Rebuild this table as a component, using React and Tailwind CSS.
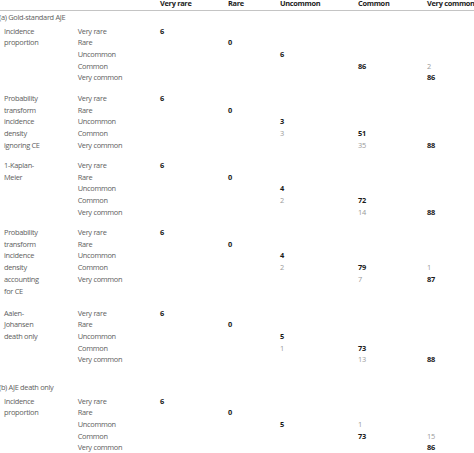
const B = (v) => ({ v, b: true })
const L = (v) => ({ v, b: false })

// columns: very rare, rare, uncommon, common, very common
const sections = [
  {
    title: '(a) Gold-standard AJE',
    pt: 'pt-[1px]',
    pb: 'pb-[2px]',
    groups: [
      {
        label: ['Incidence', 'proportion'],
        cols: [
          [B('6')],
          [null, B('0')],
          [null, null, B('6')],
          [null, null, null, B('86')],
          [null, null, null, L('2'), B('86')],
        ],
      },
      {
        label: ['Probability', 'transform', 'incidence', 'density', 'ignoring CE'],
        cols: [
          [B('6')],
          [null, B('0')],
          [null, null, B('3'), L('3')],
          [null, null, null, B('51'), L('35')],
          [null, null, null, null, B('88')],
        ],
      },
      {
        label: ['1-Kaplan-', 'Meier'],
        cols: [
          [B('6')],
          [null, B('0')],
          [null, null, B('4'), L('2')],
          [null, null, null, B('72'), L('14')],
          [null, null, null, null, B('88')],
        ],
      },
      {
        label: ['Probability', 'transform', 'incidence', 'density', 'accounting', 'for CE'],
        extra: true,
        cols: [
          [B('6')],
          [null, B('0')],
          [null, null, B('4'), L('2')],
          [null, null, null, B('79'), L('7')],
          [null, null, null, L('1'), B('87')],
        ],
      },
      {
        label: ['Aalen-', 'Johansen', 'death only'],
        cols: [
          [B('6')],
          [null, B('0')],
          [null, null, B('5'), L('1')],
          [null, null, null, B('73'), L('13')],
          [null, null, null, null, B('88')],
        ],
      },
    ],
  },
  {
    title: '(b) AJE death only',
    pt: 'pt-[7px]',
    pb: 'pb-[2px]',
    groups: [
      {
        label: ['Incidence', 'proportion'],
        cols: [
          [B('6')],
          [null, B('0')],
          [null, null, B('5')],
          [null, null, L('1'), B('73')],
          [null, null, null, L('15'), B('86')],
        ],
      },
    ],
  },
]

const rows = ['Very rare', 'Rare', 'Uncommon', 'Common', 'Very common']
const colW = ['w-[68px]', 'w-[52px]', 'w-[78px]', 'w-[69px]', 'flex-1']

function Cell({ cell }) {
  if (!cell) return <div className="h-[11.7px]" />
  return (
    <div className={cell.b ? 'h-[11.7px] font-bold text-[#1a1a1a]' : 'h-[11.7px] text-[#9a9a9a]'}>
      {cell.v}
    </div>
  )
}

function Group({ group }) {
  return (
    <div className={group.extra ? 'flex pb-[10.5px]' : 'flex pb-[8.7px]'}>
      <div className="w-[77.7px] shrink-0 pl-[4px]">
        {group.label.map((line) => (
          <div key={line} className="h-[11.7px]">{line}</div>
        ))}
      </div>
      <div className="w-[82.3px] shrink-0">
        {rows.map((r) => (
          <div key={r} className="h-[11.7px]">{r}</div>
        ))}
      </div>
      {group.cols.map((col, i) => (
        <div key={i} className={`${colW[i]} shrink-0`}>
          {col.map((cell, j) => (
            <Cell key={j} cell={cell} />
          ))}
        </div>
      ))}
    </div>
  )
}

export default function App() {
  return (
    <div
      className="w-[474px] h-[453px] overflow-hidden bg-white text-[#5e5e5e] text-[7.4px] leading-[11.7px] tracking-[-0.3px]"
      style={{ fontFamily: '"Open Sans", "Noto Sans", sans-serif' }}
    >
      <div className="flex h-[11px] border-b border-[#c4c4c4] font-bold text-[#222] leading-[6px] whitespace-nowrap">
        <div className="w-[160px] shrink-0" />
        {rows.map((r, i) => (
          <div key={r} className={`${colW[i]} shrink-0`}>{r}</div>
        ))}
      </div>
      {sections.map((s) => (
        <div key={s.title}>
          <div className={`${s.pt} ${s.pb} -ml-[1px]`}>{s.title}</div>
          {s.groups.map((g, k) => (
            <Group key={k} group={g} />
          ))}
        </div>
      ))}
    </div>
  )
}
